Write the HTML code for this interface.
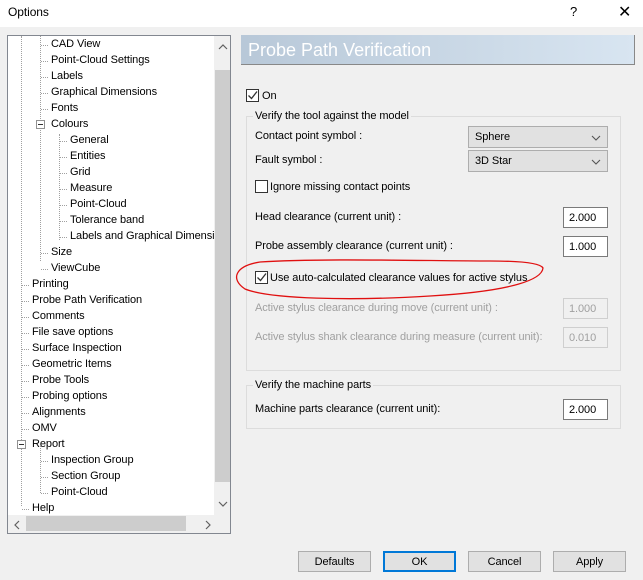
<!DOCTYPE html>
<html><head><style>
*{margin:0;padding:0;box-sizing:border-box}
body{width:643px;height:580px;background:#f0f0f0;font-family:"Liberation Sans",sans-serif;font-size:11px;letter-spacing:-0.08px;color:#000;position:relative;overflow:hidden}
.a{position:absolute;white-space:nowrap}
.title{left:0;top:0;width:643px;height:27px;background:#fff}
.tree{left:7px;top:35px;width:224px;height:499px;background:#fff;border:1px solid #828790;overflow:hidden}
.hd{position:absolute;border-top:1px dotted #a0a0a0;width:7px}
.vd{position:absolute;border-left:1px dotted #a0a0a0}
.cb{position:absolute;width:13px;height:13px;border:1px solid #333;background:#fff}
.sel{position:absolute;height:22px;background:#e1e1e1;border:1px solid #adadad;padding:4px 6px}
.inp{position:absolute;width:45px;height:21px;background:#fff;border:1px solid #7a7a7a;padding:4px 0 0 5px}
.dis{color:#a0a0a0}
.inp.dis{background:#f0f0f0;border-color:#cfcfcf}
.btn{position:absolute;top:551px;width:73px;height:21px;background:#e1e1e1;border:1px solid #adadad;text-align:center;line-height:20px}
.grp{position:absolute;border:1px solid #dcdcdc}
.t{position:absolute;white-space:nowrap}
</style></head><body>
<div class="a title"></div>
<div class="a" style="left:8px;top:5px;font-size:12px">Options</div>
<div class="a" style="left:570px;top:4px;font-size:13px">?</div>
<div class="a" style="left:618px;top:2px;font-size:16px">✕</div>

<div class="a tree">
<div class="vd" style="left:13px;top:0;height:470px"></div>
<div class="vd" style="left:32px;top:0;height:225px"></div>
<div class="vd" style="left:51px;top:98px;height:106px"></div>
<div class="vd" style="left:32px;top:410px;height:47px"></div>
<div class="hd" style="left:33px;top:9px"></div><div class="t" style="left:43px;top:2px">CAD View</div>
<div class="hd" style="left:33px;top:25px"></div><div class="t" style="left:43px;top:18px">Point-Cloud Settings</div>
<div class="hd" style="left:33px;top:41px"></div><div class="t" style="left:43px;top:34px">Labels</div>
<div class="hd" style="left:33px;top:57px"></div><div class="t" style="left:43px;top:50px">Graphical Dimensions</div>
<div class="hd" style="left:33px;top:73px"></div><div class="t" style="left:43px;top:66px">Fonts</div>
<div style="position:absolute;left:28px;top:84px;width:9px;height:9px;border:1px solid #919191;background:#fff"><div style="position:absolute;left:1px;top:3px;width:5px;border-top:1px solid #333"></div></div>
<div class="t" style="left:43px;top:82px">Colours</div>
<div class="hd" style="left:52px;top:105px"></div><div class="t" style="left:62px;top:98px">General</div>
<div class="hd" style="left:52px;top:121px"></div><div class="t" style="left:62px;top:114px">Entities</div>
<div class="hd" style="left:52px;top:137px"></div><div class="t" style="left:62px;top:130px">Grid</div>
<div class="hd" style="left:52px;top:153px"></div><div class="t" style="left:62px;top:146px">Measure</div>
<div class="hd" style="left:52px;top:169px"></div><div class="t" style="left:62px;top:162px">Point-Cloud</div>
<div class="hd" style="left:52px;top:185px"></div><div class="t" style="left:62px;top:178px">Tolerance band</div>
<div class="hd" style="left:52px;top:201px"></div><div class="t" style="left:62px;top:194px">Labels and Graphical Dimensio</div>
<div class="hd" style="left:33px;top:217px"></div><div class="t" style="left:43px;top:210px">Size</div>
<div class="hd" style="left:33px;top:233px"></div><div class="t" style="left:43px;top:226px">ViewCube</div>
<div class="hd" style="left:14px;top:249px"></div><div class="t" style="left:24px;top:242px">Printing</div>
<div class="hd" style="left:14px;top:265px"></div><div class="t" style="left:24px;top:258px">Probe Path Verification</div>
<div class="hd" style="left:14px;top:281px"></div><div class="t" style="left:24px;top:274px">Comments</div>
<div class="hd" style="left:14px;top:297px"></div><div class="t" style="left:24px;top:290px">File save options</div>
<div class="hd" style="left:14px;top:313px"></div><div class="t" style="left:24px;top:306px">Surface Inspection</div>
<div class="hd" style="left:14px;top:329px"></div><div class="t" style="left:24px;top:322px">Geometric Items</div>
<div class="hd" style="left:14px;top:345px"></div><div class="t" style="left:24px;top:338px">Probe Tools</div>
<div class="hd" style="left:14px;top:361px"></div><div class="t" style="left:24px;top:354px">Probing options</div>
<div class="hd" style="left:14px;top:377px"></div><div class="t" style="left:24px;top:370px">Alignments</div>
<div class="hd" style="left:14px;top:393px"></div><div class="t" style="left:24px;top:386px">OMV</div>
<div style="position:absolute;left:9px;top:404px;width:9px;height:9px;border:1px solid #919191;background:#fff"><div style="position:absolute;left:1px;top:3px;width:5px;border-top:1px solid #333"></div></div>
<div class="t" style="left:24px;top:402px">Report</div>
<div class="hd" style="left:33px;top:425px"></div><div class="t" style="left:43px;top:418px">Inspection Group</div>
<div class="hd" style="left:33px;top:441px"></div><div class="t" style="left:43px;top:434px">Section Group</div>
<div class="hd" style="left:33px;top:457px"></div><div class="t" style="left:43px;top:450px">Point-Cloud</div>
<div class="hd" style="left:14px;top:473px"></div><div class="t" style="left:24px;top:466px">Help</div>
<div style="position:absolute;left:206px;top:0;width:17px;height:479px;background:#f0f0f0"></div>
<div style="position:absolute;left:207px;top:34px;width:15px;height:412px;background:#cdcdcd"></div>
<svg style="position:absolute;left:210px;top:8px" width="10" height="6"><path d="M1 5 L5 1 L9 5" stroke="#606060" stroke-width="1.2" fill="none"/></svg>
<svg style="position:absolute;left:210px;top:465px" width="10" height="6"><path d="M1 1 L5 5 L9 1" stroke="#606060" stroke-width="1.2" fill="none"/></svg>
<div style="position:absolute;left:0;top:479px;width:222px;height:18px;background:#f0f0f0"></div>
<div style="position:absolute;left:18px;top:480px;width:160px;height:15px;background:#cdcdcd"></div>
<svg style="position:absolute;left:6px;top:484px" width="6" height="10"><path d="M5 1 L1 5 L5 9" stroke="#606060" stroke-width="1.2" fill="none"/></svg>
<svg style="position:absolute;left:197px;top:484px" width="6" height="10"><path d="M1 1 L5 5 L1 9" stroke="#606060" stroke-width="1.2" fill="none"/></svg>
</div>

<div class="a" style="left:241px;top:35px;width:394px;height:30px;background:linear-gradient(90deg,#b8c8d8,#d8e5f1);border-right:1px solid #888;border-bottom:1px solid #888"></div>
<div class="a" style="left:248px;top:40px;font-size:18px;color:#fff;letter-spacing:0">Probe Path Verification</div>

<div class="cb" style="left:246px;top:89px"><svg width="11" height="11" style="position:absolute;left:0;top:0"><path d="M1.5 5.5 L4.5 8.5 L10 1.5" stroke="#333" stroke-width="1.3" fill="none"/></svg></div>
<div class="a" style="left:262px;top:90px">On</div>

<div class="grp" style="left:246px;top:116px;width:375px;height:255px"></div>
<div class="a" style="left:253px;top:110px;background:#f0f0f0;padding:0 2px">Verify the tool against the model</div>
<div class="a" style="left:255px;top:130px">Contact point symbol :</div>
<div class="sel" style="left:468px;top:126px;width:140px">Sphere<svg style="position:absolute;right:6px;top:8px" width="10" height="6"><path d="M1 1 L5 5 L9 1" stroke="#555" stroke-width="1.1" fill="none"/></svg></div>
<div class="a" style="left:255px;top:154px">Fault symbol :</div>
<div class="sel" style="left:468px;top:150px;width:140px">3D Star<svg style="position:absolute;right:6px;top:8px" width="10" height="6"><path d="M1 1 L5 5 L9 1" stroke="#555" stroke-width="1.1" fill="none"/></svg></div>
<div class="cb" style="left:255px;top:180px"></div>
<div class="a" style="left:270px;top:181px">Ignore missing contact points</div>
<div class="a" style="left:255px;top:211px">Head clearance (current unit) :</div>
<div class="inp" style="left:563px;top:207px">2.000</div>
<div class="a" style="left:255px;top:240px">Probe assembly clearance (current unit) :</div>
<div class="inp" style="left:563px;top:236px">1.000</div>
<div class="cb" style="left:255px;top:271px"><svg width="11" height="11" style="position:absolute;left:0;top:0"><path d="M1.5 5.5 L4.5 8.5 L10 1.5" stroke="#333" stroke-width="1.3" fill="none"/></svg></div>
<div class="a" style="left:270px;top:272px">Use auto-calculated clearance values for active stylus</div>
<div class="a dis" style="left:255px;top:302px">Active stylus clearance during move (current unit) :</div>
<div class="inp dis" style="left:563px;top:298px">1.000</div>
<div class="a dis" style="left:255px;top:331px">Active stylus shank clearance during measure (current unit):</div>
<div class="inp dis" style="left:563px;top:327px">0.010</div>
<svg class="a" style="left:230px;top:255px" width="320" height="50"><path d="M30 7 C90 3 200 6 260 6 C290 6 310 8 313 13 C312 24 285 36 200 41 C120 46 40 44 15 34 C0 24 5 11 30 7" stroke="#e01010" stroke-width="1.3" fill="none"/></svg>

<div class="grp" style="left:246px;top:385px;width:375px;height:44px"></div>
<div class="a" style="left:253px;top:379px;background:#f0f0f0;padding:0 2px">Verify the machine parts</div>
<div class="a" style="left:255px;top:403px">Machine parts clearance (current unit):</div>
<div class="inp" style="left:563px;top:399px">2.000</div>

<div class="btn" style="left:298px">Defaults</div>
<div class="btn" style="left:383px;border:2px solid #0078d7;line-height:18px">OK</div>
<div class="btn" style="left:468px">Cancel</div>
<div class="btn" style="left:553px">Apply</div>
</body></html>
